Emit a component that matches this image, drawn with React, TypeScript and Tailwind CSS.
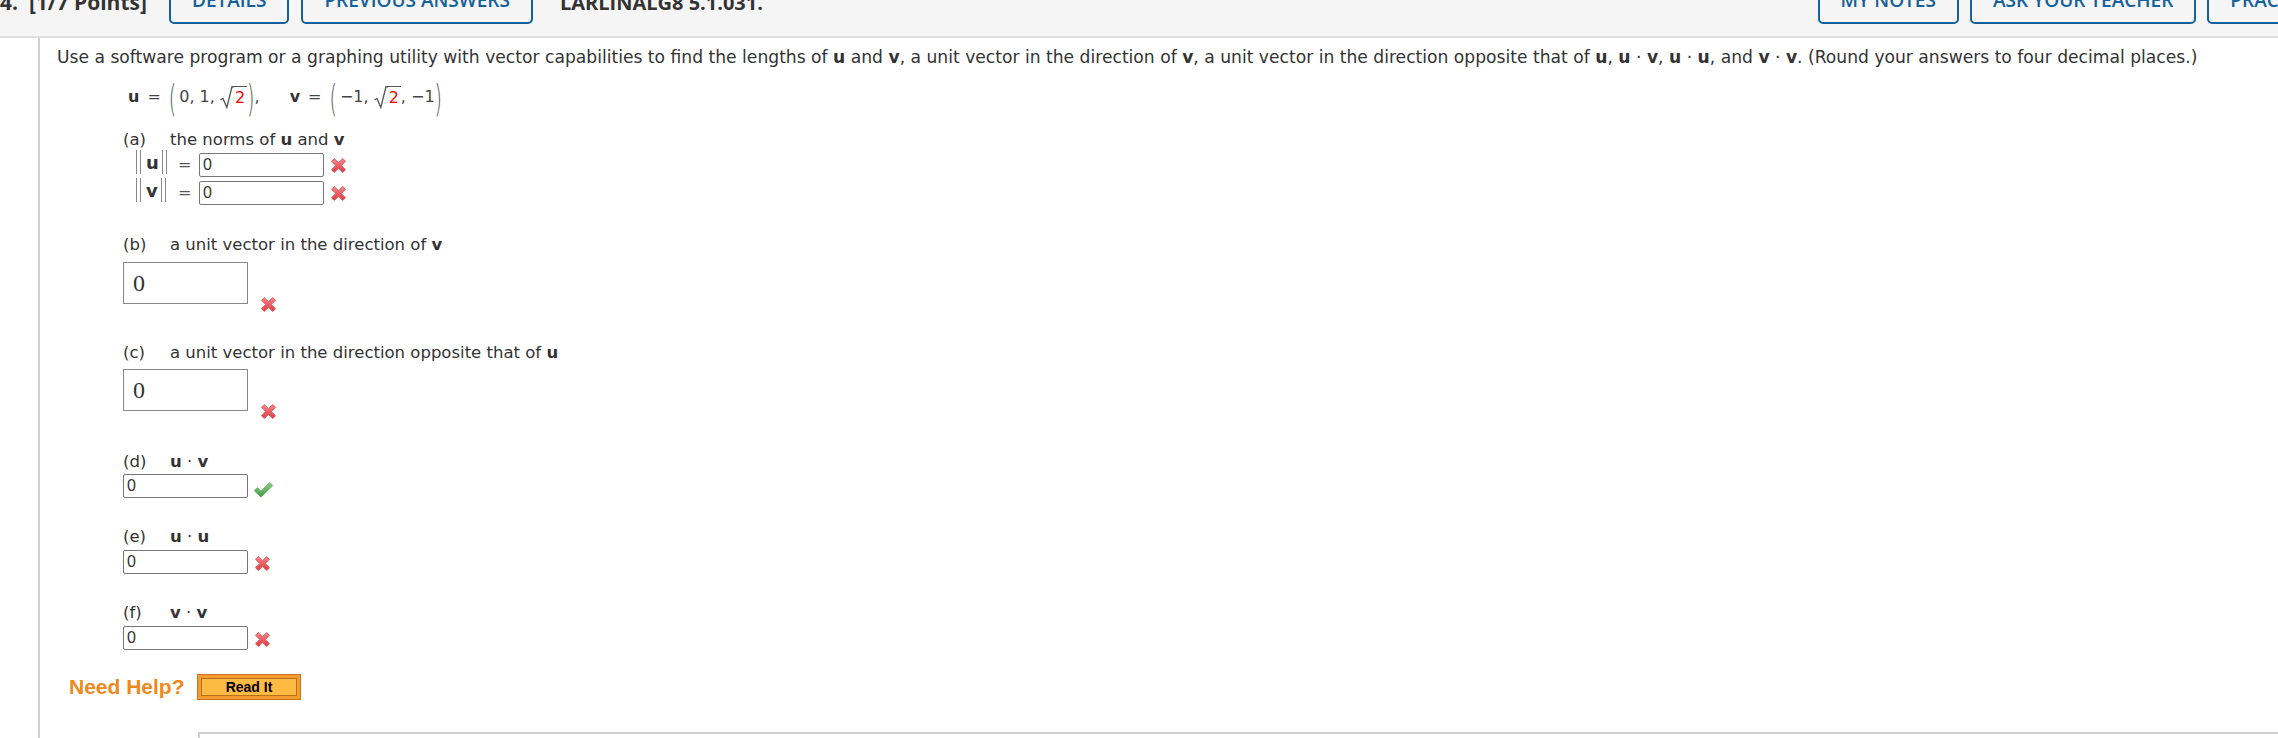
import React from "react";

const XMark = () => (
  <svg width="17" height="17" viewBox="0 0 17 17">
    <defs>
      <linearGradient id="xg" x1="0" y1="0" x2="0" y2="1">
        <stop offset="0" stopColor="#f7868a" />
        <stop offset="1" stopColor="#e03a40" />
      </linearGradient>
    </defs>
    <path
      d="M1.5 4.3 L4.3 1.5 L8.5 5.7 L12.7 1.5 L15.5 4.3 L11.3 8.5 L15.5 12.7 L12.7 15.5 L8.5 11.3 L4.3 15.5 L1.5 12.7 L5.7 8.5 Z"
      fill="url(#xg)"
      stroke="#d9474c"
      strokeWidth="0.8"
      strokeLinejoin="round"
    />
  </svg>
);

const CheckMark = () => (
  <svg width="21" height="17" viewBox="0 0 21 17">
    <defs>
      <linearGradient id="cg" x1="0" y1="0" x2="0" y2="1">
        <stop offset="0" stopColor="#8fd08a" />
        <stop offset="1" stopColor="#3e9a3f" />
      </linearGradient>
    </defs>
    <path
      d="M1.2 9.6 L4.3 6.5 L8 10.2 L16.6 1.4 L19.8 4.6 L8 16.2 Z"
      fill="url(#cg)"
      stroke="#4a9e4a"
      strokeWidth="0.6"
      strokeLinejoin="round"
    />
  </svg>
);

const Paren = ({ children }: { children: React.ReactNode }) => (
  <span className="inline-block scale-y-[2] text-[19px] leading-[20px] text-[#555] font-light">{children}</span>
);

const Sqrt = () => (
  <span className="inline-flex items-start">
    <svg width="14" height="23" viewBox="0 0 14 23">
      <path d="M0.5 14 L3 12.5 L6.8 21.5 L12 0.75 L14 0.75" fill="none" stroke="#555" strokeWidth="1.3" />
    </svg>
    <span className="border-t-[1.3px] border-[#555] leading-[22px] text-[#f00] pl-[1px] pr-[2px]">2</span>
  </span>
);

const Norm = ({ v }: { v: string }) => (
  <span className="inline-flex items-center">
    <span className="w-[5px] h-[24px] border-x border-[#888]" />
    <b className="text-[#333] text-[18px] ml-[5px] mr-[3px]">{v}</b>
    <span className="w-[5px] h-[24px] border-x border-[#888]" />
  </span>
);

const HeadBtn = ({ label }: { label: string }) => (
  <div className="h-[47px] px-[21px] border-2 border-[#14619b] rounded-[5px] flex items-center text-[#14619b] text-[19px] font-semibold shrink-0">
    {label}
  </div>
);

const SmallInput = () => (
  <div className="w-[125px] h-[24px] border border-[#777] rounded-[2px] pl-[3px] flex items-center text-[16px] text-[#333] font-['Liberation_Sans',sans-serif] bg-white">
    0
  </div>
);

const BigInput = () => (
  <div className="w-[125px] h-[42px] border-[1.5px] border-[#888] pl-[9px] flex items-center text-[24px] text-[#333] font-['Liberation_Serif',serif] bg-white">
    0
  </div>
);

const Label = ({ tag, children }: { tag: string; children: React.ReactNode }) => (
  <div className="flex h-[22px] items-center leading-[22px] text-[16.5px]">
    <span className="w-[47px]">({tag})</span>
    <span>{children}</span>
  </div>
);

export default function App() {
  return (
    <div className="w-[2278px] h-[738px] overflow-hidden bg-white text-[#333] font-['DejaVu_Sans',sans-serif] text-[16px]">
      {/* question header */}
      <header className="h-[38px] bg-[#f5f5f5] border-b-2 border-[#dedede] overflow-hidden font-['Open_Sans',sans-serif]">
        <div className="flex items-start -mt-[23px]">
          <div className="h-[47px] flex items-center pt-[4px] text-[21px] font-bold text-[#333] w-[169px] shrink-0">
            4.&nbsp;&nbsp;[1/7 Points]
          </div>
          <HeadBtn label="DETAILS" />
          <div className="w-[12px] shrink-0" />
          <HeadBtn label="PREVIOUS ANSWERS" />
          <div className="h-[47px] flex items-center pt-[4px] pl-[27px] text-[20px] font-bold text-[#333] shrink-0">
            LARLINALG8 5.1.031.
          </div>
          <div className="ml-auto flex gap-[11px] -mr-[158px]">
            <HeadBtn label="MY NOTES" />
            <HeadBtn label="ASK YOUR TEACHER" />
            <HeadBtn label="PRACTICE ANOTHER" />
          </div>
        </div>
      </header>

      {/* question body */}
      <div className="ml-[38px] border-l-2 border-[#cfcfcf] pl-[17px] pt-[7px] h-[700px]">
        <p className="leading-[24px] whitespace-nowrap text-[17.15px]">
          Use a software program or a graphing utility with vector capabilities to find the lengths of <b>u</b> and <b>v</b>, a unit vector in the direction of <b>v</b>, a unit vector in the direction opposite that of <b>u</b>, <b>u</b> · <b>v</b>, <b>u</b> · <b>u</b>, and <b>v</b> · <b>v</b>. (Round your answers to four decimal places.)
        </p>

        <div className="mt-[10px] ml-[71px] h-[36px] flex items-center text-[#444] whitespace-pre">
          <b className="text-[#333]">u</b>
          <span className="mx-[8px]">=</span>
          <Paren>(</Paren>
          <span className="ml-[3px]">0, 1, </span>
          <Sqrt />
          <Paren>)</Paren>
          <span>,</span>
          <span className="w-[30px]" />
          <b className="text-[#333]">v</b>
          <span className="mx-[8px]">=</span>
          <Paren>(</Paren>
          <span className="ml-[3px]">−1, </span>
          <Sqrt />
          <span>, −1</span>
          <Paren>)</Paren>
        </div>

        <div className="ml-[66px] mt-[14px]">
          <Label tag="a">
            the norms of <b>u</b> and <b>v</b>
          </Label>
          <div className="mt-[2px] flex items-center h-[24px]">
            <span className="ml-[13px] w-[42px]"><Norm v="u" /></span>
            <span className="w-[21px] text-[#555]">=</span>
            <SmallInput />
            <span className="ml-[6px]"><XMark /></span>
          </div>
          <div className="mt-[4px] flex items-center h-[24px]">
            <span className="ml-[13px] w-[42px]"><Norm v="v" /></span>
            <span className="w-[21px] text-[#555]">=</span>
            <SmallInput />
            <span className="ml-[6px]"><XMark /></span>
          </div>

          <div className="mt-[29px]">
            <Label tag="b">
              a unit vector in the direction of <b>v</b>
            </Label>
          </div>
          <div className="mt-[6px] flex items-end">
            <BigInput />
            <span className="ml-[12px] -mb-[9px]"><XMark /></span>
          </div>

          <div className="mt-[38px]">
            <Label tag="c">
              a unit vector in the direction opposite that of <b>u</b>
            </Label>
          </div>
          <div className="mt-[5px] flex items-end">
            <BigInput />
            <span className="ml-[12px] -mb-[9px]"><XMark /></span>
          </div>

          <div className="mt-[40px]">
            <Label tag="d">
              <b>u</b> · <b>v</b>
            </Label>
          </div>
          <div className="mt-[1px] flex items-center">
            <SmallInput />
            <span className="ml-[5px] mt-[6px]"><CheckMark /></span>
          </div>

          <div className="mt-[28px]">
            <Label tag="e">
              <b>u</b> · <b>u</b>
            </Label>
          </div>
          <div className="mt-[2px] flex items-center">
            <SmallInput />
            <span className="ml-[6px] mt-[3px]"><XMark /></span>
          </div>

          <div className="mt-[28px]">
            <Label tag="f">
              <b>v</b> · <b>v</b>
            </Label>
          </div>
          <div className="mt-[2px] flex items-center">
            <SmallInput />
            <span className="ml-[6px] mt-[3px]"><XMark /></span>
          </div>
        </div>

        <div className="mt-[24px] ml-[12px] flex items-center h-[26px]">
          <span className="w-[128px] font-['Liberation_Sans',sans-serif] font-bold text-[21px] text-[#f0891c]">Need Help?</span>
          <div className="w-[104px] h-[26px] bg-[#f49d2e] border border-[#c8741a] p-[3px]">
            <div className="h-full border border-[#b8701f] bg-[#fdbb44] flex items-center justify-center font-['Liberation_Sans',sans-serif] font-bold text-[14px] text-black">
              Read It
            </div>
          </div>
        </div>

        <div className="mt-[32px] ml-[141px] h-[40px] border-t-2 border-l-2 border-[#d0d0d0]" />
      </div>
    </div>
  );
}
